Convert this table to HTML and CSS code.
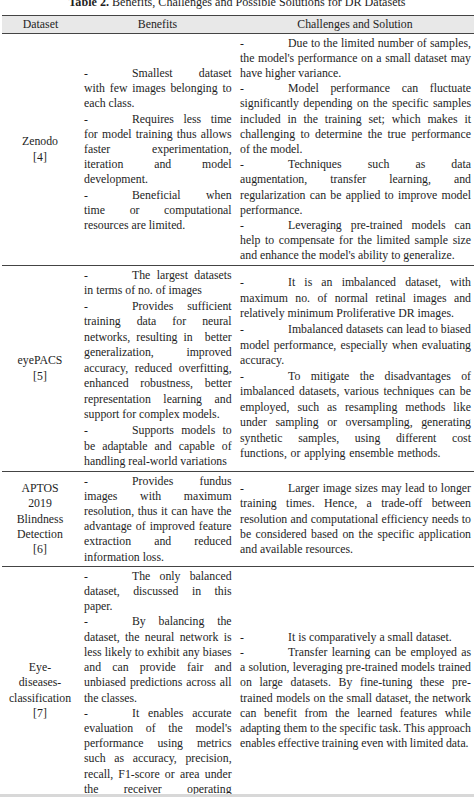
FILE: index.html
```html
<!DOCTYPE html>
<html lang="en">
<head>
<meta charset="utf-8">
<title>Table 2</title>
<link rel="stylesheet" href="styles.css">
</head>
<body>
<p class="caption"><b>Table 2.</b> Benefits, Challenges and Possible Solutions for DR Datasets</p>
<table class="dr">
  <colgroup>
    <col class="c-ds">
    <col class="c-ben">
    <col class="c-ch">
  </colgroup>
  <thead>
    <tr>
      <th>Dataset</th>
      <th>Benefits</th>
      <th>Challenges and Solution</th>
    </tr>
  </thead>
  <tbody>
    <tr>
      <td class="ds">Zenodo<br>[4]</td>
      <td class="ben">
        <p><span class="dash">-</span>Smallest dataset with few images belonging to each class.</p>
        <p><span class="dash">-</span>Requires less time for model training thus allows faster experimentation, iteration and model development.</p>
        <p><span class="dash">-</span>Beneficial when time or computational resources are limited.</p>
      </td>
      <td class="ch">
        <p><span class="dash">-</span>Due to the limited number of samples, the model's performance on a small dataset may have higher variance.</p>
        <p><span class="dash">-</span>Model performance can fluctuate significantly depending on the specific samples included in the training set; which makes it challenging to determine the true performance of the model.</p>
        <p><span class="dash">-</span>Techniques such as data augmentation, transfer learning, and regularization can be applied to improve model performance.</p>
        <p><span class="dash">-</span>Leveraging pre-trained models can help to compensate for the limited sample size and enhance the model's ability to generalize.</p>
      </td>
    </tr>
    <tr class="tall">
      <td class="ds">eyePACS<br>[5]</td>
      <td class="ben">
        <p><span class="dash">-</span>The largest datasets in terms of no. of images</p>
        <p><span class="dash">-</span>Provides sufficient training data for neural networks, resulting in &nbsp;better generalization, improved accuracy, reduced overfitting, enhanced robustness, better representation learning and support for complex models.</p>
        <p><span class="dash">-</span>Supports models to be adaptable and capable of handling real-world variations</p>
      </td>
      <td class="ch">
        <p><span class="dash">-</span>It is an imbalanced dataset, with maximum no. of normal retinal images and relatively minimum Proliferative DR images.</p>
        <p><span class="dash">-</span>Imbalanced datasets can lead to biased model performance, especially when evaluating accuracy.</p>
        <p class="loose"><span class="dash">-</span>To mitigate the disadvantages of imbalanced datasets, various techniques can be employed, such as resampling methods like under sampling or oversampling, generating synthetic samples, using different cost functions, or applying ensemble methods.</p>
      </td>
    </tr>
    <tr>
      <td class="ds">APTOS<br>2019<br>Blindness<br>Detection<br>[6]</td>
      <td class="ben">
        <p><span class="dash">-</span>Provides fundus images with maximum resolution, thus it can have the advantage of improved feature extraction and reduced information loss.</p>
      </td>
      <td class="ch">
        <p><span class="dash">-</span>Larger image sizes may lead to longer training times. Hence, a trade-off between resolution and computational efficiency needs to be considered based on the specific application and available resources.</p>
      </td>
    </tr>
    <tr>
      <td class="ds">Eye-<br>diseases-<br>classification<br>[7]</td>
      <td class="ben">
        <p class="loose"><span class="dash">-</span>The only balanced dataset, discussed in this paper.</p>
        <p><span class="dash">-</span>By balancing the dataset, the neural network is less likely to exhibit any biases and can provide fair and unbiased predictions across all the classes.</p>
        <p><span class="dash">-</span>It enables accurate evaluation of the model's performance using metrics such as accuracy, precision, recall, F1-score or area under the receiver operating characteristic curve.</p>
      </td>
      <td class="ch">
        <p><span class="dash">-</span>It is comparatively a small dataset.</p>
        <p class="tight"><span class="dash">-</span>Transfer learning can be employed as a solution, leveraging pre-trained models trained on large datasets. By fine-tuning these pre-trained models on the small dataset, the network can benefit from the learned features while adapting them to the specific task. This approach enables effective training even with limited data.</p>
      </td>
    </tr>
  </tbody>
</table>
<div class="edge"></div>
</body>
</html>
```

FILE: styles.css
```css
html, body {
  margin: 0;
  padding: 0;
  background: #ffffff;
}

body {
  font-family: "Liberation Serif", "Times New Roman", serif;
  font-size: 11.8px;
  line-height: 15.2px;
  color: #1e1e1e;
  width: 474px;
  overflow: hidden;
}

.caption {
  margin: -5px 0 0;
  text-align: center;
  font-size: 12.1px;
  line-height: 15px;
}

.dr {
  margin: 5px 0 0 2px;
  width: 472px;
  border-collapse: collapse;
  table-layout: fixed;
}

.c-ds { width: 77px; }
.c-ben { width: 157px; }
.c-ch { width: 238px; }

.dr th {
  background: #e8e8e8;
  font-weight: normal;
  text-align: center;
  padding: 1px 0 0;
  height: 16px;
  border-top: 1px solid #444444;
  border-bottom: 1px solid #444444;
}

.dr td {
  vertical-align: middle;
  padding: 1.5px 0;
  border-bottom: 1px solid #444444;
}

.dr tr.tall td {
  line-height: 15.55px;
}

.dr td.ds {
  text-align: center;
  padding-right: 1px;
}

.dr td.ben {
  padding-left: 5px;
  padding-right: 4.4px;
}

.dr td.ch {
  padding-left: 4px;
  padding-right: 3px;
}

.dr p {
  margin: 0;
  text-align: justify;
}

.dr p.loose {
  word-spacing: 0.8px;
}

.dr p.tight {
  word-spacing: -0.25px;
}

.dash {
  display: inline-block;
  width: 48px;
}

.edge {
  position: fixed;
  left: 0;
  right: 0;
  bottom: 0;
  height: 3px;
  background: #d8d8d8;
}
```
